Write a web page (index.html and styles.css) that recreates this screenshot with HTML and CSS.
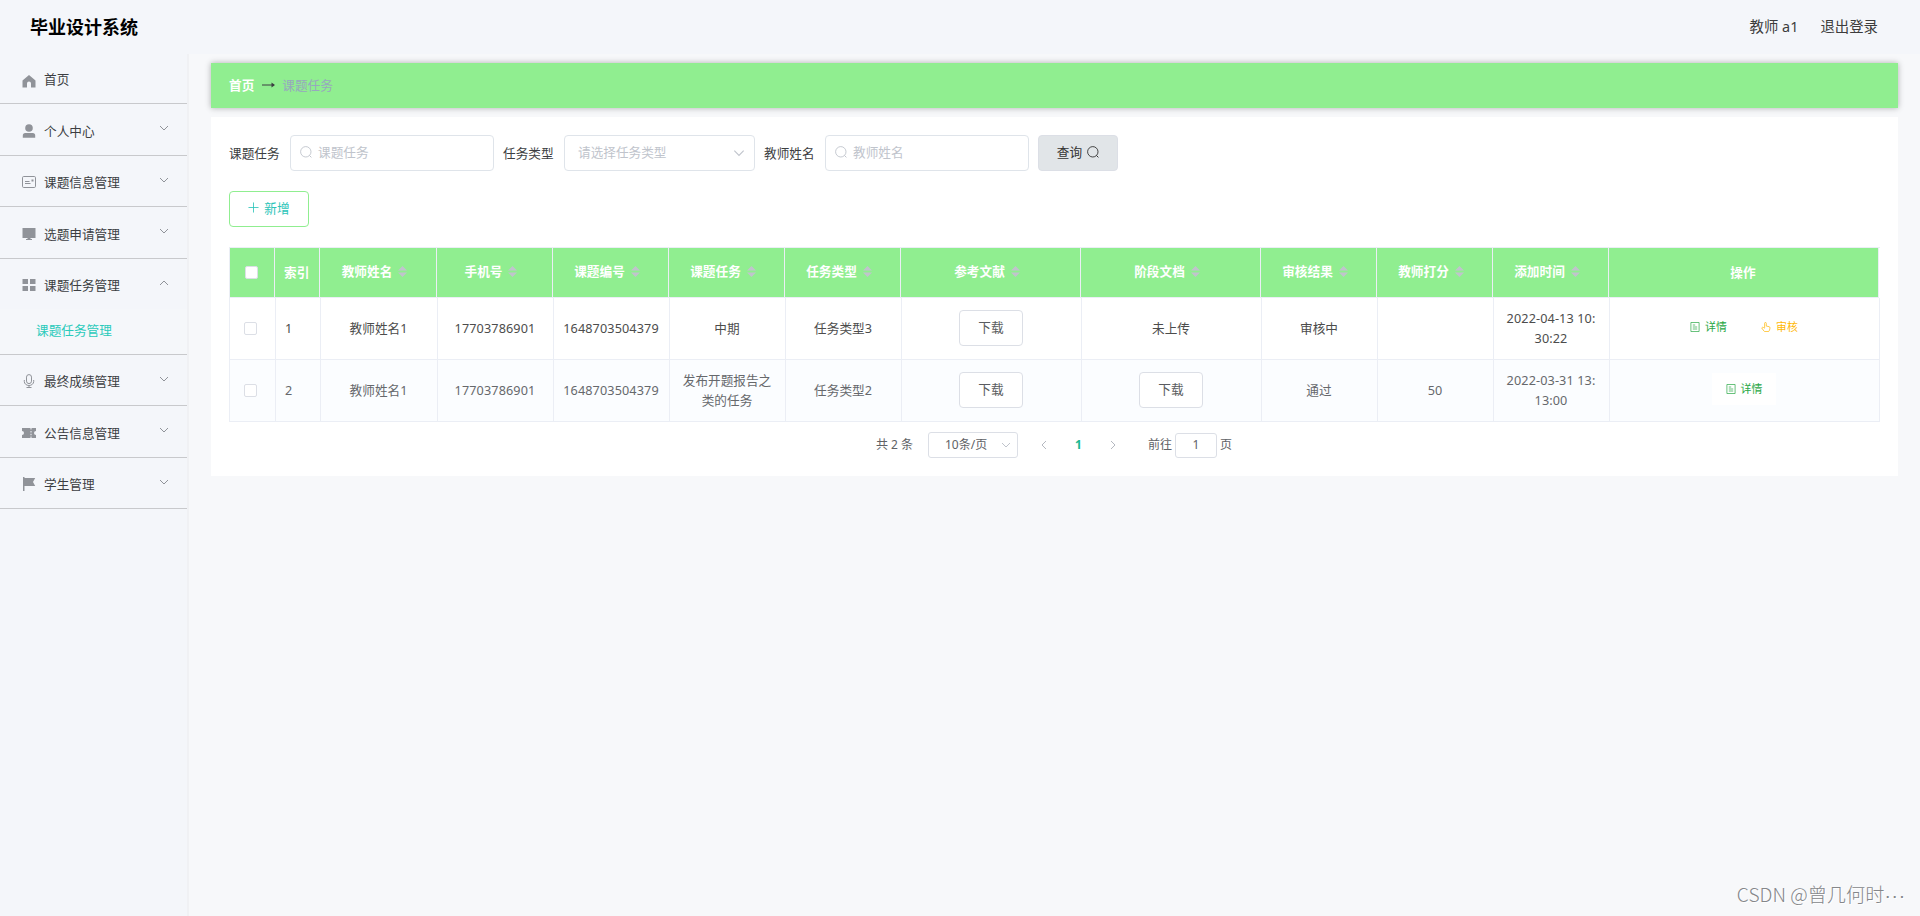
FILE: index.html
```html
<!DOCTYPE html>
<html lang="zh-CN">
<head>
  <meta charset="UTF-8" />
  <meta name="viewport" content="width=device-width, initial-scale=1.0" />
  <title>毕业设计系统</title>
  <link rel="stylesheet" href="styles.css">
</head>
<body>
  <svg class="sprite">
    <symbol id="i-down" viewBox="0 0 12 12"><path d="M2 4l4 4 4-4" fill="none" stroke="currentColor"/></symbol>
    <symbol id="i-up" viewBox="0 0 12 12"><path d="M2 8l4-4 4 4" fill="none" stroke="currentColor"/></symbol>
    <symbol id="i-search" viewBox="0 0 12 12"><circle cx="5.8" cy="5.8" r="5.2" fill="none" stroke="currentColor" stroke-width=".9"/><path d="M9.400 9.400l2 2" stroke="currentColor"/></symbol>
    <symbol id="i-home" viewBox="0 0 14 14"><path d="M7 1L.5 6.500V13.500H5V9.500a2 2 0 0 1 4 0V13.500h4.500V6.500z"/></symbol>
    <symbol id="i-user" viewBox="0 0 14 14"><circle cx="7" cy="4" r="3.800"/><path d="M.8 13.700v-2.200Q.8 9 3.300 9h7.400q2.500 0 2.500 2.500v2.200z"/></symbol>
    <symbol id="i-postcard" viewBox="0 0 14 14"><rect x=".5" y="1.500" width="13" height="11" rx="1.200" fill="none" stroke="currentColor"/><path d="M3 6.500h4.500M3 8.500h5.500" stroke="currentColor"/><path d="M9.500 4.500h2v2h-2z"/></symbol>
    <symbol id="i-platform" viewBox="0 0 14 14"><path d="M.5 1h13v10H.5zM5.500 11h3v1H10v1H4v-1h1.500z"/></symbol>
    <symbol id="i-menu" viewBox="0 0 14 14"><path d="M.5 1h5.500v5H.5zM8 1h5.500v5H8zM.5 8h5.500v5H.5zM8 8h5.500v5H8z"/></symbol>
    <symbol id="i-mic" viewBox="0 0 14 14"><g fill="none" stroke="currentColor"><rect x="4.500" y=".6" width="5" height="9" rx="2.500"/><path d="M2.300 6v1.500a4.700 4 0 0 0 9.400 0V6M7 11.500v2M4.500 13.500h5"/></g></symbol>
    <symbol id="i-ticket" viewBox="0 0 14 14"><path d="M0 2h8.500v1.500h1V2H14v3a2 2 0 0 0 0 4v3H9.500v-1.500h-1V12H0V9a2 2 0 0 0 0-4zM8.500 5v1.500h1V5zM8.500 7.800v1.500h1V7.800z" fill-rule="evenodd"/></symbol>
    <symbol id="i-flag" viewBox="0 0 14 14"><path d="M1 0h1.500v14H1zM2.500 1h10.700l-2.200 4L13.200 9H2.500z"/></symbol>
    <symbol id="i-doc" viewBox="0 0 10 10"><path d="M.9.5h8.200v9H.9zM2.800 3h2.400M2.800 5h4.400M2.800 7h4.400" fill="none" stroke="currentColor" stroke-width=".7"/></symbol>
    <symbol id="i-hand" viewBox="0 0 11 11"><path d="M4 6.500V1.400a.9.9 0 0 1 1.800 0V4.500l3 .6q1.300.3 1.100 1.600L9.300 9.200Q9 10.500 7.800 10.500H4.400q-.8 0-1.300-.7L.8 6.500q.8-1.200 2-.4L4 7" fill="none" stroke="currentColor" stroke-width=".8"/></symbol>
    <symbol id="i-arrow" viewBox="0 0 14 8"><path d="M0 4h12" stroke="currentColor"/><path d="M9.500 1.500L13 4 9.500 6.500z"/></symbol>
    <symbol id="i-plus" viewBox="0 0 12 12"><path d="M6 .5v11M.5 6h11" stroke="currentColor" stroke-width=".9"/></symbol>
    <symbol id="i-sort" viewBox="0 0 9 11"><path d="M4.500 0L9 4.500H0zM4.500 11L0 6.500h9z"/></symbol>
  </svg>

  <header class="header">
    <h1>毕业设计系统</h1>
    <div class="user"><span>教师 a1</span><span>退出登录</span></div>
  </header>

  <div class="container">
    <aside class="aside">
      <ul class="menu">
        <li class="home"><div class="title"><svg><use href="#i-home"/></svg><span>首页</span></div></li>
        <li><div class="title"><svg><use href="#i-user"/></svg><span>个人中心</span><svg class="caret"><use href="#i-down"/></svg></div></li>
        <li><div class="title"><svg><use href="#i-postcard"/></svg><span>课题信息管理</span><svg class="caret"><use href="#i-down"/></svg></div></li>
        <li><div class="title"><svg><use href="#i-platform"/></svg><span>选题申请管理</span><svg class="caret"><use href="#i-down"/></svg></div></li>
        <li class="open">
          <div class="title"><svg><use href="#i-menu"/></svg><span>课题任务管理</span><svg class="caret"><use href="#i-up"/></svg></div>
          <div class="submenu">课题任务管理</div>
        </li>
        <li><div class="title"><svg><use href="#i-mic"/></svg><span>最终成绩管理</span><svg class="caret"><use href="#i-down"/></svg></div></li>
        <li><div class="title"><svg><use href="#i-ticket"/></svg><span>公告信息管理</span><svg class="caret"><use href="#i-down"/></svg></div></li>
        <li><div class="title"><svg><use href="#i-flag"/></svg><span>学生管理</span><svg class="caret"><use href="#i-down"/></svg></div></li>
      </ul>
    </aside>

    <main class="main">
      <nav class="breadcrumb">
        <b>首页</b>
        <svg><use href="#i-arrow"/></svg>
        <span>课题任务</span>
      </nav>

      <section class="card">
        <div class="search">
          <label>课题任务</label>
          <div class="input"><svg><use href="#i-search"/></svg><span>课题任务</span></div>
          <label>任务类型</label>
          <div class="input select"><span>请选择任务类型</span><svg><use href="#i-down"/></svg></div>
          <label>教师姓名</label>
          <div class="input"><svg><use href="#i-search"/></svg><span>教师姓名</span></div>
          <button class="btn-query">查询<svg><use href="#i-search"/></svg></button>
        </div>

        <button class="btn-add"><svg><use href="#i-plus"/></svg>新增</button>

        <div class="table">
          <table class="thead">
            <colgroup>
              <col class="c-check"><col class="c-index"><col class="c-name"><col><col><col><col><col class="c-file"><col class="c-file"><col><col><col><col class="c-action">
            </colgroup>
            <tr>
              <th><i class="checkbox"></i></th>
              <th class="index">索引</th>
              <th class="sort">教师姓名<svg><use href="#i-sort"/></svg></th>
              <th class="sort">手机号<svg><use href="#i-sort"/></svg></th>
              <th class="sort">课题编号<svg><use href="#i-sort"/></svg></th>
              <th class="sort">课题任务<svg><use href="#i-sort"/></svg></th>
              <th class="sort">任务类型<svg><use href="#i-sort"/></svg></th>
              <th class="sort">参考文献<svg><use href="#i-sort"/></svg></th>
              <th class="sort">阶段文档<svg><use href="#i-sort"/></svg></th>
              <th class="sort">审核结果<svg><use href="#i-sort"/></svg></th>
              <th class="sort">教师打分<svg><use href="#i-sort"/></svg></th>
              <th class="sort">添加时间<svg><use href="#i-sort"/></svg></th>
              <th>操作</th>
            </tr>
          </table>
          <table class="tbody">
            <colgroup>
              <col class="c-check"><col class="c-index"><col class="c-name"><col><col><col><col><col class="c-file"><col class="c-file"><col><col><col><col class="c-action">
            </colgroup>
            <tr>
              <td><i class="checkbox"></i></td>
              <td class="index">1</td>
              <td>教师姓名1</td>
              <td class="code">17703786901</td>
              <td class="code">1648703504379</td>
              <td>中期</td>
              <td>任务类型3</td>
              <td><button class="btn-file">下载</button></td>
              <td>未上传</td>
              <td>审核中</td>
              <td></td>
              <td class="code">2022-04-13 10:<br>30:22</td>
              <td>
                <div class="actions">
                  <button class="detail"><svg><use href="#i-doc"/></svg>详情</button>
                  <button class="audit"><svg><use href="#i-hand"/></svg>审核</button>
                </div>
              </td>
            </tr>
            <tr class="striped">
              <td><i class="checkbox"></i></td>
              <td class="index">2</td>
              <td>教师姓名1</td>
              <td class="code">17703786901</td>
              <td class="code">1648703504379</td>
              <td>发布开题报告之<br>类的任务</td>
              <td>任务类型2</td>
              <td><button class="btn-file">下载</button></td>
              <td><button class="btn-file">下载</button></td>
              <td>通过</td>
              <td>50</td>
              <td class="code">2022-03-31 13:<br>13:00</td>
              <td>
                <div class="actions">
                  <button class="detail"><svg><use href="#i-doc"/></svg>详情</button>
                </div>
              </td>
            </tr>
          </table>
        </div>

        <div class="pagination">
          <span class="total">共 2 条</span>
          <div class="sizes"><span>10条/页</span><svg><use href="#i-down"/></svg></div>
          <svg class="prev"><use href="#i-down"/></svg>
          <b>1</b>
          <svg class="next"><use href="#i-down"/></svg>
          <span class="goto">前往</span>
          <div class="jump">1</div>
          <span>页</span>
        </div>
      </section>
    </main>
  </div>

  <div class="watermark">CSDN @曾几何时<span>···</span></div>
</body>
</html>
```

FILE: styles.css
```css
* {
  box-sizing: border-box;
}
body {
  margin: 0;
  height: 916px;
  overflow: hidden;
  font-family: "Noto Sans", "Noto Sans CJK SC", sans-serif;
  font-size: 12.65px;
  line-height: 20px;
  color: #3c3e42;
  background: #f7f8fa;
}
svg {
  fill: currentColor;
  flex: none;
}
.sprite {
  display: none;
}
button {
  font: inherit;
  padding: 0;
  border: 0;
  background: #fff;
  display: inline-flex;
  align-items: center;
  justify-content: center;
}

/* header */
.header {
  height: 54px;
  padding: 0 42px 0 30px;
  display: flex;
  align-items: center;
  justify-content: space-between;
  background: #f4f6fa;
}
.header h1 {
  margin: 0;
  font-size: 18px;
  line-height: 54px;
  color: #000;
}
.user {
  display: flex;
  gap: 22px;
  font-size: 14.4px;
  color: #3c3c3c;
}
.container {
  display: flex;
  height: 862px;
}

/* menu */
.aside {
  width: 189px;
  background: #f4f6fa;
  border-right: 2px solid #f0f1f4;
}
.menu {
  list-style: none;
  margin: 0;
  padding: 0;
}
.menu li {
  height: 51.5px;
  border-bottom: 1px solid #c8c9cc;
}
.menu li.home {
  height: 50.3px;
}
.menu li.open {
  height: 96px;
}
.title {
  display: flex;
  align-items: center;
  height: 50px;
  padding: 3px 16px 0 22px;
}
.title svg {
  width: 14px;
  height: 14px;
  margin-right: 8px;
  color: #909399;
}
.home .title {
  padding: 0 16px 1px 22px;
}
.home .title svg {
  margin-top: 5px;
}
.title .caret {
  width: 12px;
  height: 12px;
  margin: -5px 1px 0 auto;
}
.submenu {
  height: 45px;
  padding-left: 36px;
  line-height: 43px;
  color: #2bcabb;
  background: #f5f7fa;
}

/* content */
.main {
  flex: 1;
  padding: 9px 22px 0;
}
.breadcrumb {
  display: flex;
  align-items: center;
  height: 45px;
  padding: 0 18px 2px;
  background: #90ee90;
  box-shadow: 0 0 6px rgba(0, 0, 0, .3);
}
.breadcrumb b {
  color: #fff;
}
.breadcrumb svg {
  width: 14px;
  height: 8px;
  margin: 0 6px 0 8px;
}
.breadcrumb span {
  color: #97a8be;
}
.card {
  height: 359px;
  margin-top: 9px;
  padding: 18px;
  background: #fff;
}
.search {
  display: flex;
  align-items: center;
}
.search label {
  width: 61px;
}
.input {
  display: flex;
  align-items: center;
  width: 204px;
  height: 36px;
  margin-right: 9px;
  padding: 0 9px;
  border: 1px solid #dfe4ea;
  border-radius: 4px;
  color: #c0c4cc;
}
.input span {
  margin-top: -3px;
}
.input svg {
  width: 12px;
  height: 12px;
  margin: -2px 6px 0 0;
}
.select {
  width: 191px;
  padding-left: 13px;
}
.select svg {
  width: 14px;
  height: 14px;
  margin: 0 -1px 0 auto;
}
.search .btn-query {
  width: 80px;
  height: 36px;
  padding-bottom: 2px;
  border: 1px solid #dcdfe6;
  border-radius: 4px;
  background: #e1e5e8;
  color: #333;
}
.btn-query svg {
  width: 12px;
  height: 12px;
  margin-left: 5px;
}
.btn-add {
  display: flex;
  width: 80px;
  height: 36px;
  margin: 20px 0;
  padding-bottom: 3px;
  border: 1px solid #90ee90;
  border-radius: 4px;
  color: #2bc4b8;
}
.btn-add svg {
  width: 11px;
  height: 11px;
  margin-right: 5px;
}

/* table */
.table {
  width: 1651px;
  border: 1px solid #ebeef5;
  border-width: 1px 0 0 1px;
}
table {
  width: 1650px;
  table-layout: fixed;
  border-collapse: separate;
  border-spacing: 0;
}
col {
  width: 116px;
}
.c-check {
  width: 46px;
}
.c-index {
  width: 45px;
}
.c-name {
  width: 117px;
}
.c-file {
  width: 180px;
}
.c-action {
  width: 270px;
}
.thead {
  width: 1649px;
}
.thead .c-check {
  width: 45px;
}
th,
td {
  padding: 0 1px 0 0;
  text-align: center;
  border-right: 1px solid #ebeef5;
  border-bottom: 1px solid #ebeef5;
}
th {
  height: 50px;
  padding-bottom: 1px;
  color: #fff;
  background: #90ee90;
}
th.sort {
  padding-right: 2px;
  padding-bottom: 4px;
}
th svg {
  width: 9px;
  height: 11px;
  margin-left: 6px;
  margin-right: 5px;
  vertical-align: -1px;
  color: #c0c4cc;
}
td {
  height: 62px;
  padding-bottom: 2px;
  color: #4c4c4c;
}
.striped td {
  color: #66686c;
  background: #fbfdff;
}
th.index,
td.index {
  padding-left: 9px;
  text-align: left;
}
.code {
  letter-spacing: .12px;
}
.checkbox {
  display: block;
  width: 13px;
  height: 13px;
  margin: 2px 0 0 14px;
  border: 1px solid #dcdfe6;
  border-radius: 2px;
  background: #fff;
}
th .checkbox {
  margin: 0 0 0 15px;
}
td .btn-file {
  width: 64px;
  height: 36px;
  padding-bottom: 1px;
  border: 1px solid #dcdfe6;
  border-radius: 4px;
  color: #5a5c60;
  vertical-align: middle;
}
.actions {
  display: flex;
  justify-content: center;
  gap: 7px;
  margin-top: -2px;
}
.actions button {
  width: 64px;
  height: 32px;
  font-size: 10.9px;
}
.actions svg {
  width: 10px;
  height: 10px;
  margin-right: 5px;
}
.detail {
  color: #28a745;
}
.audit {
  color: #ffb808;
}

/* pagination */
.pagination {
  display: flex;
  align-items: center;
  height: 26px;
  margin: 10px 0 0 647px;
  font-size: 12px;
  color: #606266;
}
.total {
  width: 52px;
}
.pagination > span,
.pagination > b {
  margin-top: -1px;
}
.sizes {
  display: flex;
  align-items: center;
  width: 90px;
  height: 26px;
  padding: 0 5px 0 16px;
  border: 1px solid #dcdfe6;
  border-radius: 3px;
}
.sizes span {
  margin-top: -1px;
}
.sizes svg {
  width: 12px;
  height: 12px;
  margin-left: auto;
  color: #c0c4cc;
}
.pagination .prev,
.pagination .next {
  width: 12px;
  height: 12px;
  color: #b4b8c0;
}
.prev {
  margin-left: 20px;
  transform: rotate(90deg);
}
.next {
  transform: rotate(-90deg);
}
.pagination b {
  width: 57px;
  text-align: center;
  color: #18b890;
}
.pagination .goto {
  width: 27px;
  margin-left: 29px;
  white-space: nowrap;
}
.jump {
  width: 42px;
  height: 25px;
  margin-right: 3px;
  line-height: 21px;
  text-align: center;
  border: 1px solid #dcdfe6;
  border-radius: 3px;
}

.watermark {
  position: absolute;
  right: 14px;
  bottom: 5px;
  font-family: "Noto Sans CJK SC", sans-serif;
  font-size: 19.2px;
  font-weight: 300;
  line-height: 30px;
  color: #85878a;
  text-shadow: 1px 1px 0 #fff;
}
.watermark span {
  font-family: "Liberation Sans", sans-serif;
  letter-spacing: .8px;
}
```
